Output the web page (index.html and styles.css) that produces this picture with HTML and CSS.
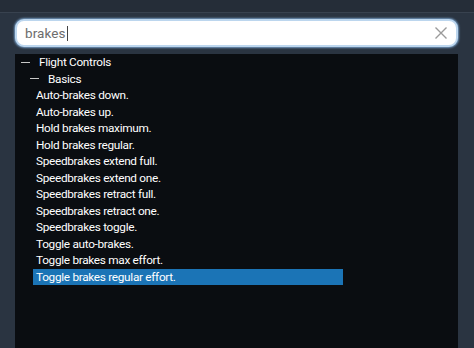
FILE: index.html
```html
<!DOCTYPE html>
<html>
<head>
<meta charset="utf-8">
<link rel="stylesheet" href="styles.css">
</head>
<body>
<div class="topbar"></div>
<div class="main">
  <div class="search">
    <span class="query">brakes</span><span class="caret"></span>
    <svg class="clear" width="14" height="14" viewBox="0 0 14 14"><path d="M1.5 1.5L12.5 12.5M12.5 1.5L1.5 12.5" stroke="#9a9a9a" stroke-width="1.4" fill="none"/></svg>
  </div>
  <div class="list">
    <div class="row lvl0"><span class="dash"></span>Flight Controls</div>
    <div class="row lvl1"><span class="dash"></span>Basics</div>
    <div class="row item">Auto-brakes down.</div>
    <div class="row item">Auto-brakes up.</div>
    <div class="row item">Hold brakes maximum.</div>
    <div class="row item">Hold brakes regular.</div>
    <div class="row item">Speedbrakes extend full.</div>
    <div class="row item">Speedbrakes extend one.</div>
    <div class="row item">Speedbrakes retract full.</div>
    <div class="row item">Speedbrakes retract one.</div>
    <div class="row item">Speedbrakes toggle.</div>
    <div class="row item">Toggle auto-brakes.</div>
    <div class="row item">Toggle brakes max effort.</div>
    <div class="row item selected">Toggle brakes regular effort.</div>
  </div>
</div>
</body>
</html>
```
FILE: styles.css
```css
html, body {
  margin: 0;
  padding: 0;
  height: 100%;
  overflow: hidden;
}
body {
  background: #2a3441;
  font-family: Roboto, "Liberation Sans", sans-serif;
  display: flex;
  flex-direction: column;
}
.topbar {
  height: 12px;
  background: #252d38;
  border-bottom: 1px solid #38424f;
  flex: none;
}
.main {
  flex: 1;
  display: flex;
  flex-direction: column;
  padding: 6px 16px 0 15px;
  min-height: 0;
}
.search {
  height: 24px;
  background: #fff;
  border: 2px solid #bcd6ee;
  border-radius: 9px;
  box-shadow: 0 0 2px 1px #7197bd;
  display: flex;
  align-items: center;
  padding: 0 8px 0 8px;
  flex: none;
}
.query {
  color: #6d6d6d;
  font-size: 13.5px;
  letter-spacing: 0.1px;
}
.caret {
  width: 1px;
  height: 15px;
  background: #444;
  margin-left: 1px;
}
.clear {
  margin-left: auto;
}
.list {
  margin-top: 7px;
  flex: 1;
  background: #0a0d11;
  color: #ffffff;
  font-size: 11.8px;
  letter-spacing: -0.3px;
}
.row {
  height: 16.5px;
  line-height: 16.5px;
  display: flex;
  align-items: center;
  white-space: nowrap;
}
.lvl0 {
  padding-left: 6px;
}
.lvl1 {
  padding-left: 15px;
}
.dash {
  width: 9px;
  height: 1px;
  background: #c8c8c8;
  margin-right: 9px;
}
.item {
  padding-left: 21px;
}
.selected {
  margin-left: 18px;
  padding-left: 3px;
  width: 310px;
  background: #1b74b6;
  box-sizing: border-box;
}
```
